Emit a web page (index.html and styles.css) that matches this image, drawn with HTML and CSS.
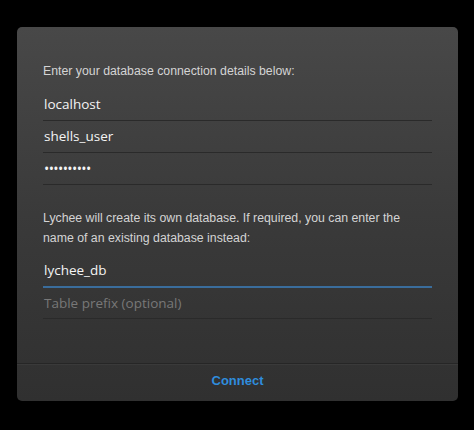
FILE: index.html
```html
<!DOCTYPE html>
<html>
<head>
<meta charset="utf-8">
<link rel="stylesheet" href="styles.css">
</head>
<body>
<div class="card">
  <div class="content">
    <p class="text first">Enter your database connection details below:</p>
    <div class="field">localhost</div>
    <div class="field">shells_user</div>
    <div class="field pw">••••••••••</div>
    <p class="text second">Lychee will create its own database. If required, you can enter the name of an existing database instead:</p>
    <div class="field active">lychee_db</div>
    <div class="field placeholder">Table prefix (optional)</div>
  </div>
  <div class="footer"><span class="btn">Connect</span></div>
</div>
</body>
</html>
```
FILE: styles.css
```css
html, body {
  margin: 0;
  padding: 0;
  background: #000;
}
body {
  padding: 27px 0 0 17px;
}
.card {
  width: 441px;
  height: 374px;
  box-sizing: border-box;
  border-radius: 5px;
  background: linear-gradient(to bottom, #484848 0%, #3a3a3a 50%, #303030 100%);
  display: flex;
  flex-direction: column;
  justify-content: space-between;
  overflow: hidden;
}
.content {
  padding: 34px 26px 0 26px;
}
.text {
  margin: 0;
  font-family: "Liberation Sans", Arial, sans-serif;
  font-size: 12.3px;
  line-height: 20px;
  color: #d4d4d4;
}
.text.first { margin-bottom: 8px; }
.text.second { margin: 23px 0 7px 0; }
.field {
  height: 31px;
  line-height: 31px;
  border-bottom: 1px solid #2a2a2a;
  font-family: "Open Sans", "Noto Sans", sans-serif;
  font-size: 13.5px;
  color: #f4f4f4;
  padding-left: 1px;
}
.field.pw {
  font-size: 14px;
  letter-spacing: -0.6px;
}
.field.active {
  border-bottom: 2px solid #3a6d9c;
}
.field.placeholder {
  height: 30px;
  line-height: 30px;
  color: #787878;
}
.footer {
  height: 38px;
  padding-bottom: 4px;
  box-sizing: border-box;
  border-top: 1px solid #262626;
  box-shadow: inset 0 1px 0 rgba(255,255,255,0.04);
  display: flex;
  align-items: center;
  justify-content: center;
}
.btn {
  font-family: "Liberation Sans", Arial, sans-serif;
  font-weight: bold;
  font-size: 13px;
  color: #2f8ddd;
}
```
